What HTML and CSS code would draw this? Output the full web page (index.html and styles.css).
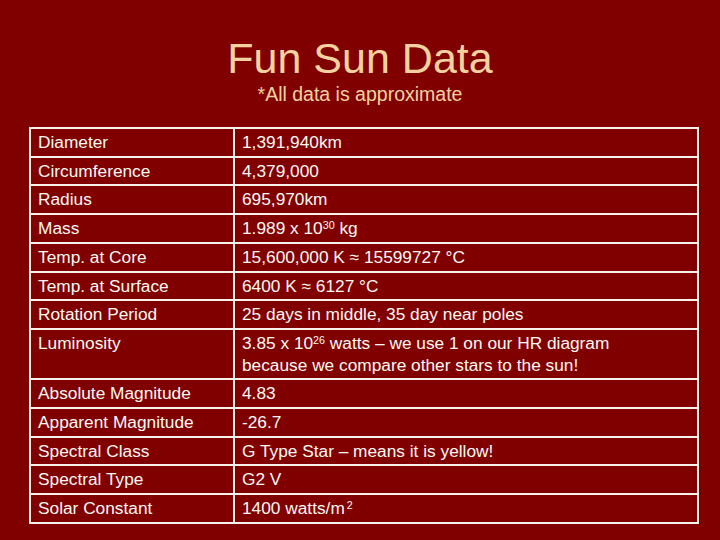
FILE: index.html
```html
<!DOCTYPE html>
<html>
<head>
<meta charset="utf-8">
<link rel="stylesheet" href="styles.css">
</head>
<body>
<div class="slide">
  <h1 class="title">Fun Sun Data</h1>
  <p class="subtitle">*All data is approximate</p>
  <table class="data">
    <colgroup><col class="c1"><col class="c2"></colgroup>
    <tr><td>Diameter</td><td>1,391,940km</td></tr>
    <tr><td>Circumference</td><td>4,379,000</td></tr>
    <tr><td>Radius</td><td>695,970km</td></tr>
    <tr><td>Mass</td><td>1.989 x 10<sup>30</sup> kg</td></tr>
    <tr><td>Temp. at Core</td><td>15,600,000 K ≈ 15599727 °C</td></tr>
    <tr><td>Temp. at Surface</td><td>6400 K ≈ 6127 °C</td></tr>
    <tr><td>Rotation Period</td><td>25 days in middle, 35 day near poles</td></tr>
    <tr><td>Luminosity</td><td>3.85 x 10<sup>26</sup> watts – we use 1 on our HR diagram<br>because we compare other stars to the sun!</td></tr>
    <tr><td>Absolute Magnitude</td><td>4.83</td></tr>
    <tr><td>Apparent Magnitude</td><td>-26.7</td></tr>
    <tr><td>Spectral Class</td><td>G Type Star – means it is yellow!</td></tr>
    <tr><td>Spectral Type</td><td>G2 V</td></tr>
    <tr><td>Solar Constant</td><td>1400 watts/m<sup class="sq">2</sup></td></tr>
  </table>
</div>
</body>
</html>
```
FILE: styles.css
```css
html, body {
  margin: 0;
  padding: 0;
  background: #800000;
}
.slide {
  width: 720px;
  height: 540px;
  background: #800000;
  font-family: "Liberation Sans", Arial, sans-serif;
  overflow: hidden;
}
.title {
  margin: 0;
  padding-top: 37px;
  font-weight: normal;
  font-size: 43px;
  line-height: 43px;
  text-align: center;
  color: #f3d2a0;
}
.subtitle {
  margin: 2px 0 0 0;
  font-size: 19.5px;
  line-height: 24px;
  text-align: center;
  color: #f3d2a0;
}
.data {
  margin: 21px 0 0 29px;
  width: 668px;
  table-layout: fixed;
  border-collapse: collapse;
  border: 2px solid #f6f1ea;
  color: #fbf8f4;
  font-size: 17.3px;
}
.c1 { width: 204px; }
.c2 { width: 464px; }
.data td {
  border: 2px solid #f6f1ea;
  padding: 3px 7px 2px 7px;
  line-height: 21.7px;
  vertical-align: top;
}
.data sup {
  font-size: 0.62em;
  vertical-align: 0.5em;
  line-height: 0;
}
.data sup.sq {
  padding-left: 2px;
}
```
